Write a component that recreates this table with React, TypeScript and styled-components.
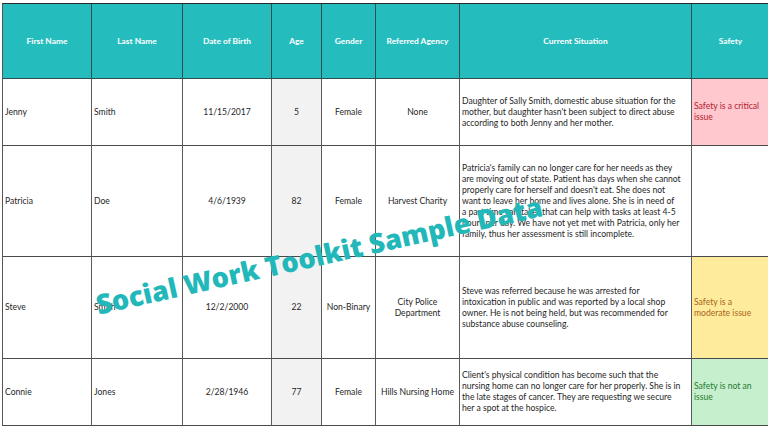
import React from "react";
import styled, { createGlobalStyle } from "styled-components";

const Global = createGlobalStyle`
  html, body { margin: 0; padding: 0; background: #ffffff; }
  body { width: 768px; height: 427px; overflow: hidden; }
`;

const Page = styled.div`
  position: relative;
  width: 768px;
  height: 427px;
  overflow: hidden;
  padding: 3px 0 0 2px;
  box-sizing: border-box;
  font-family: "Lato", "Liberation Sans", sans-serif;
`;

const Sheet = styled.div`
  display: grid;
  grid-template-columns: 89px 91px 89px 50px 54px 84px 232px 77px;
  grid-template-rows: 75px 67px 111px 102px 67px;
  border-top: 1px solid #2b2b2b;
  border-left: 1px solid #555;
  width: 766px;
`;

const HeadCell = styled.div<{ $last?: boolean }>`
  background: #25bcbe;
  color: #ffffff;
  font-weight: 700;
  font-size: 8.4px;
  display: flex;
  align-items: center;
  justify-content: center;
  text-align: center;
  border-right: ${(p) => (p.$last ? "none" : "1px solid #2f4f4f")};
  border-bottom: 1px solid #2f4f4f;
  box-sizing: border-box;
`;

type Align = "left" | "center";
type Tone = "plain" | "age" | "bad" | "neutral" | "good";

const tones: Record<Tone, { bg: string; fg: string }> = {
  plain: { bg: "#ffffff", fg: "#262626" },
  age: { bg: "#f2f2f2", fg: "#262626" },
  bad: { bg: "#ffc7ce", fg: "#b0242e" },
  neutral: { bg: "#ffeb9c", fg: "#a8651a" },
  good: { bg: "#c6efce", fg: "#277a30" },
};

const Cell = styled.div<{ $align: Align; $tone: Tone; $last?: boolean }>`
  background: ${(p) => tones[p.$tone].bg};
  color: ${(p) => tones[p.$tone].fg};
  font-size: 8.6px;
  line-height: 11px;
  display: flex;
  flex-direction: column;
  justify-content: center;
  align-items: ${(p) => (p.$align === "center" ? "center" : "flex-start")};
  text-align: ${(p) => p.$align};
  padding: 0 2px;
  border-right: ${(p) => (p.$last ? "none" : "1.5px solid #5a5a5a")};
  border-bottom: 1.5px solid #4a4a4a;
  box-sizing: border-box;
`;

const Line = styled.span`
  display: block;
  white-space: nowrap;
`;

const Watermark = styled.div`
  position: absolute;
  left: 319px;
  top: 255px;
  transform: translate(-50%, -50%) rotate(-12.5deg);
  white-space: nowrap;
  font-family: "Open Sans", "DejaVu Sans", sans-serif;
  font-weight: 800;
  font-size: 27.3px;
  color: #22b8ba;
  pointer-events: none;
`;

const headers = [
  "First Name",
  "Last Name",
  "Date of Birth",
  "Age",
  "Gender",
  "Referred Agency",
  "Current Situation",
  "Safety",
];

type Row = {
  first: string;
  last: string;
  dob: string;
  age: string;
  gender: string;
  agency: string[];
  situation: string[];
  safety: string[];
  tone: Tone;
};

const rows: Row[] = [
  {
    first: "Jenny",
    last: "Smith",
    dob: "11/15/2017",
    age: "5",
    gender: "Female",
    agency: ["None"],
    situation: [
      "Daughter of Sally Smith, domestic abuse situation for the",
      "mother, but daughter hasn't been subject to direct abuse",
      "according to both Jenny and her mother.",
    ],
    safety: ["Safety is a critical", "issue"],
    tone: "bad",
  },
  {
    first: "Patricia",
    last: "Doe",
    dob: "4/6/1939",
    age: "82",
    gender: "Female",
    agency: ["Harvest Charity"],
    situation: [
      "Patricia's family can no longer care for her needs as they",
      "are moving out of state. Patient has days when she cannot",
      "properly care for herself and doesn't eat. She does not",
      "want to leave her home and lives alone. She is in need of",
      "a part time caretaker that can help with tasks at least 4-5",
      "hours per day. We have not yet met with Patricia, only her",
      "family, thus her assessment is still incomplete.",
    ],
    safety: [],
    tone: "plain",
  },
  {
    first: "Steve",
    last: "Smith",
    dob: "12/2/2000",
    age: "22",
    gender: "Non-Binary",
    agency: ["City Police", "Department"],
    situation: [
      "Steve was referred because he was arrested for",
      "intoxication in public and was reported by a local shop",
      "owner. He is not being held, but was recommended for",
      "substance abuse counseling.",
    ],
    safety: ["Safety is a", "moderate issue"],
    tone: "neutral",
  },
  {
    first: "Connie",
    last: "Jones",
    dob: "2/28/1946",
    age: "77",
    gender: "Female",
    agency: ["Hills Nursing Home"],
    situation: [
      "Client's physical condition has become such that the",
      "nursing home can no longer care for her properly. She is in",
      "the late stages of cancer. They are requesting we secure",
      "her a spot at the hospice.",
    ],
    safety: ["Safety is not an", "issue"],
    tone: "good",
  },
];

const lines = (arr: string[]) => arr.map((t, i) => <Line key={i}>{t}</Line>);

export default function App() {
  return (
    <>
      <Global />
      <Page>
        <Sheet>
          {headers.map((h, i) => (
            <HeadCell key={h} $last={i === headers.length - 1}>
              {h}
            </HeadCell>
          ))}
          {rows.map((r) => (
            <React.Fragment key={r.first}>
              <Cell $align="left" $tone="plain">{r.first}</Cell>
              <Cell $align="left" $tone="plain">{r.last}</Cell>
              <Cell $align="center" $tone="plain">{r.dob}</Cell>
              <Cell $align="center" $tone="age">{r.age}</Cell>
              <Cell $align="center" $tone="plain">{r.gender}</Cell>
              <Cell $align="center" $tone="plain">{lines(r.agency)}</Cell>
              <Cell $align="left" $tone="plain">{lines(r.situation)}</Cell>
              <Cell $align="left" $tone={r.tone} $last>
                {lines(r.safety)}
              </Cell>
            </React.Fragment>
          ))}
        </Sheet>
        <Watermark>Social Work Toolkit Sample Data</Watermark>
      </Page>
    </>
  );
}
